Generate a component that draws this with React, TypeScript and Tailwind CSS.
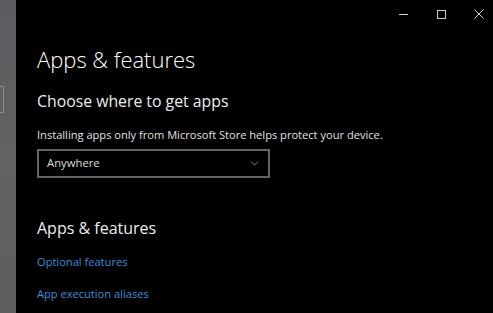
import { ChevronDown } from "lucide-react";

export default function App() {
  return (
    <div
      className="flex h-[313px] w-[493px] overflow-hidden bg-black text-[#e6e6e6]"
      style={{ fontFamily: "'Open Sans', 'Noto Sans', sans-serif" }}
    >
      {/* left edge of the nav pane behind */}
      <div className="relative h-full w-[16px] shrink-0 bg-gradient-to-b from-[#5b5d60] via-[#606264] to-[#5e5e5e]">
        <div className="absolute left-0 top-[86px] h-[27px] w-[4px] border border-l-0 border-[#8a8c8e]" />
      </div>

      <div className="flex min-w-0 flex-1 flex-col">
        {/* title bar */}
        <div className="flex h-[28px] items-center justify-end gap-[28px] pr-[9px]">
          <div className="flex w-[10px] justify-center">
            <div className="h-px w-[9px] bg-[#cfcfcf]" />
          </div>
          <div className="flex w-[10px] justify-center">
            <div className="h-[9px] w-[9px] border border-[#cfcfcf]" />
          </div>
          <div className="flex w-[10px] justify-center">
            <svg width="10" height="10" viewBox="0 0 10 10">
              <path d="M0.5 0.5 L9.5 9.5 M9.5 0.5 L0.5 9.5" stroke="#cfcfcf" strokeWidth="1" />
            </svg>
          </div>
        </div>

        <div className="flex flex-col pl-[21px]">
          <h1 className="mt-[16px] text-[22px] font-light leading-[30px] text-white">
            Apps &amp; features
          </h1>
          <h2 className="mt-[16px] text-[15.8px] leading-[22px] text-[#eeeeee]">
            Choose where to get apps
          </h2>
          <p className="mt-[15px] text-[11.1px] leading-[16px] text-[#e0e0e0]">
            Installing apps only from Microsoft Store helps protect your device.
          </p>
          <div className="mt-[6px] flex h-[29px] w-[233px] items-center justify-between border-2 border-[#646464] pl-[8px] pr-[7px]">
            <span className="text-[11.3px] text-[#dcdcdc]">Anywhere</span>
            <ChevronDown size={13} strokeWidth={1.25} className="text-[#bdbdbd]" />
          </div>
          <h2 className="mt-[39px] text-[16px] leading-[22px] text-[#eeeeee]">
            Apps &amp; features
          </h2>
          <a className="mt-[15px] text-[11.1px] leading-[16px] text-[#3a8fdc]">
            Optional features
          </a>
          <a className="mt-[16px] text-[11.1px] leading-[16px] text-[#3a8fdc]">
            App execution aliases
          </a>
        </div>
      </div>
    </div>
  );
}
